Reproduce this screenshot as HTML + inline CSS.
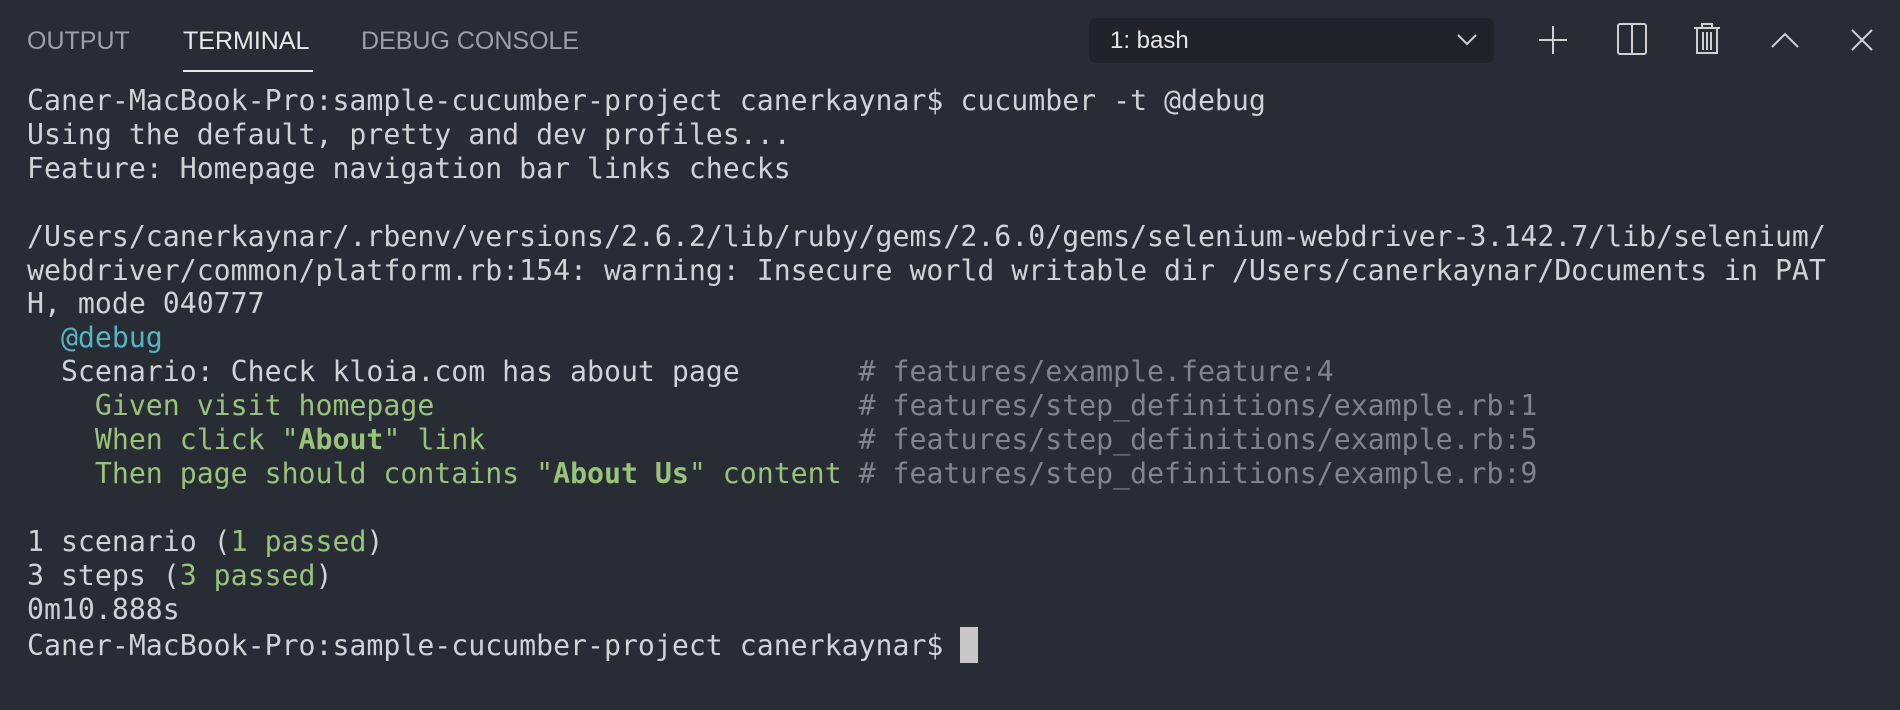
<!DOCTYPE html>
<html><head><meta charset="utf-8">
<style>
html,body{margin:0;padding:0;background:#282c34;width:1900px;height:710px;overflow:hidden}
.tab{position:absolute;top:27px;font-family:"Liberation Sans",sans-serif;font-size:25px;color:#9da0a6}
.act{color:#e8e8e8}
.ul{position:absolute;left:183px;top:70px;width:130px;height:2px;background:#e8e8e8}
.dd{position:absolute;left:1089px;top:18px;width:405px;height:45px;background:#212329;border-radius:7px}
.dd span{position:absolute;left:21px;top:9px;font-family:"Liberation Sans",sans-serif;font-size:24px;color:#e8e8e8}
pre{position:absolute;left:27px;top:84px;margin:0;font-family:"DejaVu Sans Mono","Liberation Mono",monospace;font-size:28.2px;line-height:33.9px;color:#d0d2d5;white-space:pre}
.g{color:#98c379}.c{color:#56b6c2}.m{color:#80848c}
b{font-weight:bold}
.cur{display:inline-block;width:18px;height:36px;background:#c8c8c8;vertical-align:-8px}
svg{position:absolute}
</style></head><body>
<div class="tab" style="left:27px">OUTPUT</div>
<div class="tab act" style="left:183px">TERMINAL</div>
<div class="tab" style="left:361px">DEBUG CONSOLE</div>
<div class="ul"></div>
<div class="dd"><span>1: bash</span>
<svg style="left:367px;top:14px" width="22" height="16" viewBox="0 0 22 16"><path d="M2 3 L11 12 L20 3" fill="none" stroke="#d0d0d0" stroke-width="2"/></svg></div>
<svg style="left:1537px;top:24px" width="32" height="32" viewBox="0 0 32 32"><path d="M16 2V30M2 16H30" stroke="#d0d0d0" stroke-width="2"/></svg>
<svg style="left:1616px;top:22px" width="32" height="34" viewBox="0 0 32 34"><rect x="2" y="2" width="28" height="30" rx="2" fill="none" stroke="#d0d0d0" stroke-width="2"/><path d="M16 2V32" stroke="#d0d0d0" stroke-width="2"/></svg>
<svg style="left:1692px;top:22px" width="30" height="34" viewBox="0 0 30 34"><path d="M2 6H28M10 6V2H20V6M5 6V31H25V6M11 10V28M15 10V28M19 10V28" fill="none" stroke="#d0d0d0" stroke-width="2"/></svg>
<svg style="left:1770px;top:30px" width="30" height="20" viewBox="0 0 30 20"><path d="M2 17L15 4L28 17" fill="none" stroke="#d0d0d0" stroke-width="2"/></svg>
<svg style="left:1849px;top:27px" width="26" height="26" viewBox="0 0 26 26"><path d="M3 3L23 23M23 3L3 23" stroke="#d0d0d0" stroke-width="2"/></svg>
<pre>Caner-MacBook-Pro:sample-cucumber-project canerkaynar$ cucumber -t @debug
Using the default, pretty and dev profiles...
Feature: Homepage navigation bar links checks

/Users/canerkaynar/.rbenv/versions/2.6.2/lib/ruby/gems/2.6.0/gems/selenium-webdriver-3.142.7/lib/selenium/
webdriver/common/platform.rb:154: warning: Insecure world writable dir /Users/canerkaynar/Documents in PAT
H, mode 040777
  <span class="c">@debug</span>
  Scenario: Check kloia.com has about page       <span class="m"># features/example.feature:4</span>
    <span class="g">Given visit homepage</span>                         <span class="m"># features/step_definitions/example.rb:1</span>
    <span class="g">When click "<b>About</b>" link</span>                      <span class="m"># features/step_definitions/example.rb:5</span>
    <span class="g">Then page should contains "<b>About Us</b>" content</span> <span class="m"># features/step_definitions/example.rb:9</span>

1 scenario (<span class="g">1 passed</span>)
3 steps (<span class="g">3 passed</span>)
0m10.888s
Caner-MacBook-Pro:sample-cucumber-project canerkaynar$ <span class="cur"></span></pre>
</body></html>
